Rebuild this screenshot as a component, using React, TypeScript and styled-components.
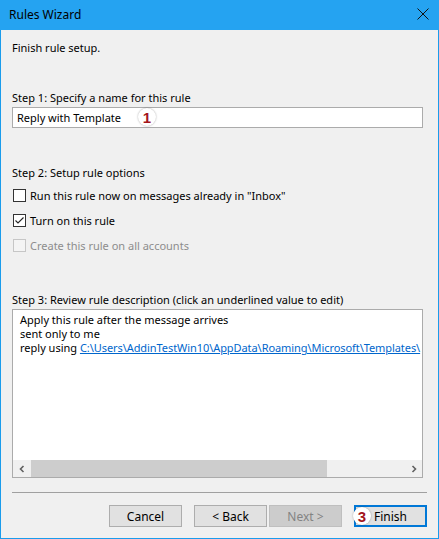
import React from 'react';
import styled, { createGlobalStyle } from 'styled-components';

const GlobalStyle = createGlobalStyle`
  html, body {
    margin: 0;
    padding: 0;
    background: #f0f0f0;
  }
  body {
    font-family: 'Noto Sans', 'Liberation Sans', Arial, sans-serif;
    font-size: 11px;
    color: #000;
  }
`;

const Window = styled.div`
  box-sizing: border-box;
  width: 439px;
  height: 539px;
  display: flex;
  flex-direction: column;
  background: #f0f0f0;
  border: 1px solid #1a9cec;
  border-top: none;
`;

const TitleBar = styled.div`
  height: 29px;
  flex-shrink: 0;
  display: flex;
  align-items: center;
  justify-content: space-between;
  background: #25a3f1;
  margin: 0 -1px;
  padding: 0 10px 1px 9px;
`;

const Title = styled.span`
  font-size: 12px;
  color: #000;
`;

const CloseButton = styled.div`
  width: 12px;
  height: 12px;
  display: flex;
  align-items: center;
  justify-content: center;
  margin-top: -1px;
`;

const Body = styled.div`
  flex: 1;
  display: flex;
  flex-direction: column;
  padding: 10px 11px 0 11px;
`;

const Heading = styled.div`
  line-height: 16px;
`;

const Section = styled.div<{ $top: number }>`
  display: flex;
  flex-direction: column;
  margin-top: ${({ $top }) => $top}px;
  margin-right: 4px;
`;

const FieldWrap = styled.div`
  position: relative;
  margin-top: 1px;
`;

const TextInput = styled.div`
  box-sizing: border-box;
  height: 21px;
  display: flex;
  align-items: center;
  padding: 0 4px;
  background: #fff;
  border: 1px solid #ababab;
`;

const Badge = styled.div<{ $x: number; $y: number }>`
  position: absolute;
  left: ${({ $x }) => $x}px;
  top: ${({ $y }) => $y}px;
  width: 18px;
  height: 18px;
  border-radius: 50%;
  background: #fff;
  box-shadow: 0 0 2px rgba(0, 0, 0, 0.35);
  display: flex;
  align-items: center;
  justify-content: center;
  color: #a3151c;
  font-family: 'Liberation Sans', Arial, sans-serif;
  font-weight: 700;
  font-size: 15px;
  line-height: 1;
  z-index: 2;
`;

const OptionRow = styled.div<{ $disabled?: boolean }>`
  height: 25px;
  display: flex;
  align-items: center;
  gap: 4px;
  color: ${({ $disabled }) => ($disabled ? '#8d8d8d' : '#000')};
`;

const OptionList = styled.div`
  display: flex;
  flex-direction: column;
  margin-top: 2px;
`;

const Box = styled.div<{ $disabled?: boolean }>`
  box-sizing: border-box;
  width: 13px;
  height: 13px;
  margin-left: 1px;
  border: 1px solid ${({ $disabled }) => ($disabled ? '#c6c6c6' : '#333')};
  background: ${({ $disabled }) => ($disabled ? '#f4f4f4' : '#fff')};
  display: flex;
  align-items: center;
  justify-content: center;
`;

const Description = styled.div`
  box-sizing: border-box;
  height: 169px;
  margin-top: 1px;
  display: flex;
  flex-direction: column;
  background: #fff;
  border: 1px solid #ababab;
`;

const DescText = styled.div`
  flex: 1;
  padding: 3px 0 0 7px;
  line-height: 14px;
  white-space: nowrap;
  overflow: hidden;
`;

const Link = styled.span`
  color: #0066cc;
  text-decoration: underline;
  letter-spacing: -0.07px;
`;

const HScroll = styled.div`
  height: 17px;
  display: flex;
  align-items: stretch;
  background: #f0f0f0;
`;

const ScrollArrow = styled.div`
  width: 17px;
  display: flex;
  align-items: center;
  justify-content: center;
`;

const ScrollTrack = styled.div`
  flex: 1;
  display: flex;
  align-items: stretch;
  padding: 0 1px;
`;

const Thumb = styled.div`
  width: 296px;
  background: #cdcdcd;
`;

const Separator = styled.div`
  height: 1px;
  background: #a0a0a0;
  margin-top: 14px;
`;

const ButtonBar = styled.div`
  display: flex;
  justify-content: flex-end;
  align-items: center;
  margin-top: 12px;
`;

const Button = styled.div<{ $disabled?: boolean; $default?: boolean; $gap?: number }>`
  position: relative;
  box-sizing: border-box;
  width: 73px;
  height: 22px;
  margin-left: ${({ $gap }) => $gap ?? 0}px;
  display: flex;
  align-items: center;
  justify-content: center;
  background: ${({ $disabled }) => ($disabled ? '#cccccc' : '#e1e1e1')};
  border: ${({ $default, $disabled }) =>
    $default ? '2px solid #0078d7' : $disabled ? '1px solid #bfbfbf' : '1px solid #adadad'};
  color: ${({ $disabled }) => ($disabled ? '#838383' : '#000')};
  font-size: 12px;
`;

const CheckMark = () => (
  <svg width="11" height="11" viewBox="0 0 11 11">
    <path d="M1.5 5.5 L4 8 L9.5 2.5" fill="none" stroke="#222" strokeWidth="1.1" />
  </svg>
);

const Chevron = ({ dir }: { dir: 'left' | 'right' }) => (
  <svg width="8" height="8" viewBox="0 0 8 8">
    <path
      d={dir === 'left' ? 'M5.5 1 L2.5 4 L5.5 7' : 'M2.5 1 L5.5 4 L2.5 7'}
      fill="none"
      stroke="#606060"
      strokeWidth="1.6"
    />
  </svg>
);

const options = [
  { label: 'Run this rule now on messages already in "Inbox"', checked: false, disabled: false },
  { label: 'Turn on this rule', checked: true, disabled: false },
  { label: 'Create this rule on all accounts', checked: false, disabled: true },
];

export default function App() {
  return (
    <>
      <GlobalStyle />
      <Window>
        <TitleBar>
          <Title>Rules Wizard</Title>
          <CloseButton>
            <svg width="12" height="12" viewBox="0 0 12 12">
              <path d="M0.5 0.5 L11.5 11.5 M11.5 0.5 L0.5 11.5" stroke="#111" strokeWidth="1" />
            </svg>
          </CloseButton>
        </TitleBar>
        <Body>
          <Heading>Finish rule setup.</Heading>

          <Section $top={34}>
            <Heading>Step 1: Specify a name for this rule</Heading>
            <FieldWrap>
              <TextInput>Reply with Template</TextInput>
              <Badge $x={126} $y={1}>1</Badge>
            </FieldWrap>
          </Section>

          <Section $top={37}>
            <Heading>Step 2: Setup rule options</Heading>
            <OptionList>
              {options.map((o) => (
                <OptionRow key={o.label} $disabled={o.disabled}>
                  <Box $disabled={o.disabled}>{o.checked && <CheckMark />}</Box>
                  <span>{o.label}</span>
                </OptionRow>
              ))}
            </OptionList>
          </Section>

          <Section $top={34}>
            <Heading>Step 3: Review rule description (click an underlined value to edit)</Heading>
            <Description>
              <DescText>
                Apply this rule after the message arrives
                <br />
                sent only to me
                <br />
                reply using <Link>C:\Users\AddinTestWin10\AppData\Roaming\Microsoft\Templates\</Link>
              </DescText>
              <HScroll>
                <ScrollArrow>
                  <Chevron dir="left" />
                </ScrollArrow>
                <ScrollTrack>
                  <Thumb />
                </ScrollTrack>
                <ScrollArrow>
                  <Chevron dir="right" />
                </ScrollArrow>
              </HScroll>
            </Description>
          </Section>

          <Separator />

          <ButtonBar>
            <Button>Cancel</Button>
            <Button $gap={12}>&lt; Back</Button>
            <Button $gap={2} $disabled>Next &gt;</Button>
            <Button $gap={12} $default>
              Finish
              <Badge $x={-3} $y={0}>3</Badge>
            </Button>
          </ButtonBar>
        </Body>
      </Window>
    </>
  );
}
